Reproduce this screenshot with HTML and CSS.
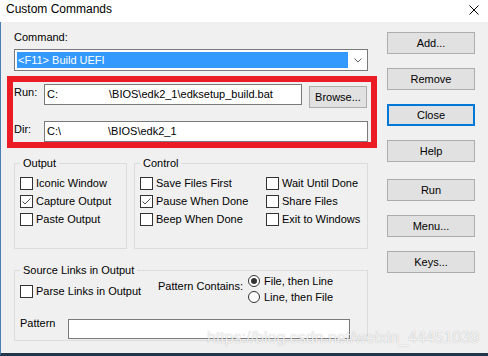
FILE: index.html
```html
<!DOCTYPE html>
<html lang="en">
<head>
    <meta charset="UTF-8">
    <title>Custom Commands</title>
    <link rel="stylesheet" href="styles.css">
</head>
<body>
    <div class="window">
        <div class="titlebar">
            <span class="title">Custom Commands</span>
            <svg class="close-x" width="10" height="10" viewBox="0 0 10 10">
                <path d="M0.5 0.5 L9.5 9.5 M9.5 0.5 L0.5 9.5" stroke="#000" stroke-width="1" fill="none"/>
            </svg>
        </div>

        <div class="dialog">
            <div class="main">
                <div class="label">Command:</div>
                <div class="combo">
                    <div class="combo-value">&lt;F11&gt; Build UEFI</div>
                    <div class="combo-arrow">
                        <svg width="8" height="5" viewBox="0 0 8 5">
                            <path d="M0.5 0.5 L4 4 L7.5 0.5" stroke="#606060" stroke-width="1" fill="none"/>
                        </svg>
                    </div>
                </div>

                <div class="highlight">
                    <div class="field-row">
                        <span class="field-label">Run:</span>
                        <div class="textbox run-box">C:<span class="redact run-redact"></span>\BIOS\edk2_1\edksetup_build.bat</div>
                        <button class="btn browse">Browse...</button>
                    </div>
                    <div class="field-row dir-row">
                        <span class="field-label">Dir:</span>
                        <div class="textbox dir-box">C:\<span class="redact dir-redact"></span>\BIOS\edk2_1</div>
                    </div>
                </div>

                <div class="groups">
                    <fieldset class="group output-group">
                        <legend>Output</legend>
                        <div class="check"><span class="box"></span>Iconic Window</div>
                        <div class="check"><span class="box"><svg width="11" height="11" viewBox="0 0 11 11"><path d="M1.5 5.5 L4 8 L9.5 2.5" stroke="#555" stroke-width="1" fill="none"/></svg></span>Capture Output</div>
                        <div class="check"><span class="box"></span>Paste Output</div>
                    </fieldset>
                    <fieldset class="group control-group">
                        <legend>Control</legend>
                        <div class="control-grid">
                            <div class="check"><span class="box"></span>Save Files First</div>
                            <div class="check"><span class="box"></span>Wait Until Done</div>
                            <div class="check"><span class="box"><svg width="11" height="11" viewBox="0 0 11 11"><path d="M1.5 5.5 L4 8 L9.5 2.5" stroke="#555" stroke-width="1" fill="none"/></svg></span>Pause When Done</div>
                            <div class="check"><span class="box"></span>Share Files</div>
                            <div class="check"><span class="box"></span>Beep When Done</div>
                            <div class="check"><span class="box"></span>Exit to Windows</div>
                        </div>
                    </fieldset>
                </div>

                <fieldset class="group links-group">
                    <legend>Source Links in Output</legend>
                    <div class="links-row">
                        <div class="check parse-check"><span class="box"></span>Parse Links in Output</div>
                        <div class="contains-label">Pattern Contains:</div>
                        <div class="radios">
                            <div class="radio-item"><span class="radio checked"></span>File, then Line</div>
                            <div class="radio-item"><span class="radio"></span>Line, then File</div>
                        </div>
                    </div>
                    <div class="pattern-row">
                        <span class="pattern-label">Pattern</span>
                        <div class="textbox pattern-box"></div>
                    </div>
                </fieldset>
            </div>

            <div class="side">
                <button class="btn">Add...</button>
                <button class="btn">Remove</button>
                <button class="btn btn-default">Close</button>
                <button class="btn">Help</button>
                <button class="btn btn-gap">Run</button>
                <button class="btn">Menu...</button>
                <button class="btn">Keys...</button>
            </div>
        </div>

        <div class="watermark">https://blog.csdn.net/weixin_44451039</div>
    </div>
</body>
</html>
```

FILE: styles.css
```css
body {
    margin: 0;
    font-family: 'Liberation Sans', Arial, sans-serif;
    font-size: 11px;
    color: #000;
}

.window {
    width: 488px;
    height: 356px;
    position: relative;
    overflow: hidden;
    background: #f0f0f0;
}

/* Title bar */
.titlebar {
    height: 22px;
    background: #fff;
    display: flex;
    justify-content: space-between;
    align-items: flex-start;
}

.title {
    font-size: 12px;
    line-height: 19px;
    padding-left: 6px;
}

.close-x {
    margin: 5px 9px 0 0;
}

.dialog {
    display: flex;
    height: 334px;
    box-sizing: border-box;
    border-left: 1px solid #4a7fb5;
    border-bottom: 3px solid #22354a;
}

.main {
    width: 354px;
    margin-left: 13px;
    padding-top: 9px;
}

.label {
    line-height: 13px;
}

/* Command combo */
.combo {
    margin-top: 5px;
    border: 1px solid #7a7a7a;
    background: #fff;
    padding: 2px;
    display: flex;
}

.combo-value {
    flex: 1;
    height: 16px;
    line-height: 16px;
    background: #3399ff;
    color: #fff;
    padding-left: 1px;
}

.combo-arrow {
    width: 17px;
    display: flex;
    align-items: center;
    justify-content: flex-end;
    padding-right: 3px;
    box-sizing: border-box;
}

/* Red annotation box */
.highlight {
    margin: 5px 0 0 -7px;
    width: 370px;
    box-sizing: border-box;
    border: 6px solid #ec1c24;
    padding: 2px 0 0 1px;
}

.field-row {
    display: flex;
    align-items: flex-start;
}

.dir-row {
    margin-top: 13px;
}

.field-label {
    width: 30px;
    line-height: 16px;
}

.textbox {
    height: 21px;
    box-sizing: border-box;
    border: 1px solid #7a7a7a;
    background: #fff;
    line-height: 19px;
    padding-left: 2px;
    white-space: nowrap;
}

.run-box {
    width: 258px;
}

.dir-box {
    width: 324px;
}

.redact {
    display: inline-block;
    vertical-align: top;
    height: 19px;
    background: #fff;
}

.run-redact {
    width: 51px;
}

.dir-redact {
    width: 47px;
}

/* Buttons */
.btn {
    display: block;
    width: 88px;
    height: 22px;
    margin: 0 0 14px;
    padding: 0;
    background: #e1e1e1;
    border: 1px solid #adadad;
    font: inherit;
    color: #000;
}

.btn-default {
    border: 2px solid #0078d7;
}

.btn-gap {
    margin-top: 17px;
}

.browse {
    width: 58px;
    margin: 2px 0 0 7px;
}

.side {
    margin-left: 19px;
    padding-top: 10px;
    width: 88px;
}

/* Group boxes */
.groups {
    display: flex;
    gap: 7px;
    margin-top: 9px;
}

.group {
    margin: 0;
    min-width: 0;
    box-sizing: border-box;
    border: 1px solid #dcdcdc;
    padding: 5px 0 20px 5px;
}

.group legend {
    padding: 0 3px;
    line-height: 12px;
}

.output-group {
    width: 113px;
}

.control-group {
    width: 234px;
}

.control-grid {
    display: grid;
    grid-template-columns: 126px auto;
}

.check {
    display: flex;
    align-items: center;
    height: 18px;
    gap: 3px;
    white-space: nowrap;
}

.box {
    width: 13px;
    height: 13px;
    box-sizing: border-box;
    border: 1px solid #333;
    background: #fff;
    display: flex;
}

.links-group {
    width: 354px;
    margin-top: 15px;
    padding: 0 0 1px 5px;
}

.links-row {
    display: flex;
    margin-top: -3px;
}

.parse-check {
    width: 138px;
    height: 32px;
    margin-top: 2px;
}

.contains-label {
    width: 90px;
    margin-top: 7px;
    line-height: 13px;
    white-space: nowrap;
}

.radio-item {
    display: flex;
    align-items: center;
    height: 16px;
    gap: 4px;
    white-space: nowrap;
}

.radio {
    width: 12px;
    height: 12px;
    box-sizing: border-box;
    border: 1px solid #333;
    border-radius: 50%;
    background: #fff;
    display: flex;
    align-items: center;
    justify-content: center;
}

.radio.checked::after {
    content: "";
    width: 6px;
    height: 6px;
    border-radius: 50%;
    background: #333;
}

.pattern-row {
    display: flex;
    align-items: flex-start;
    margin-top: 12px;
}

.pattern-label {
    width: 48px;
    margin-top: -2px;
    line-height: 13px;
}

.pattern-box {
    width: 282px;
    height: 20px;
}

/* csdn watermark */
.watermark {
    position: absolute;
    left: 207px;
    top: 330px;
    font-size: 16px;
    line-height: 16px;
    color: rgba(255, 255, 255, 0.85);
    text-shadow: 0 0 1px rgba(0, 0, 0, 0.3);
    white-space: nowrap;
}
```
